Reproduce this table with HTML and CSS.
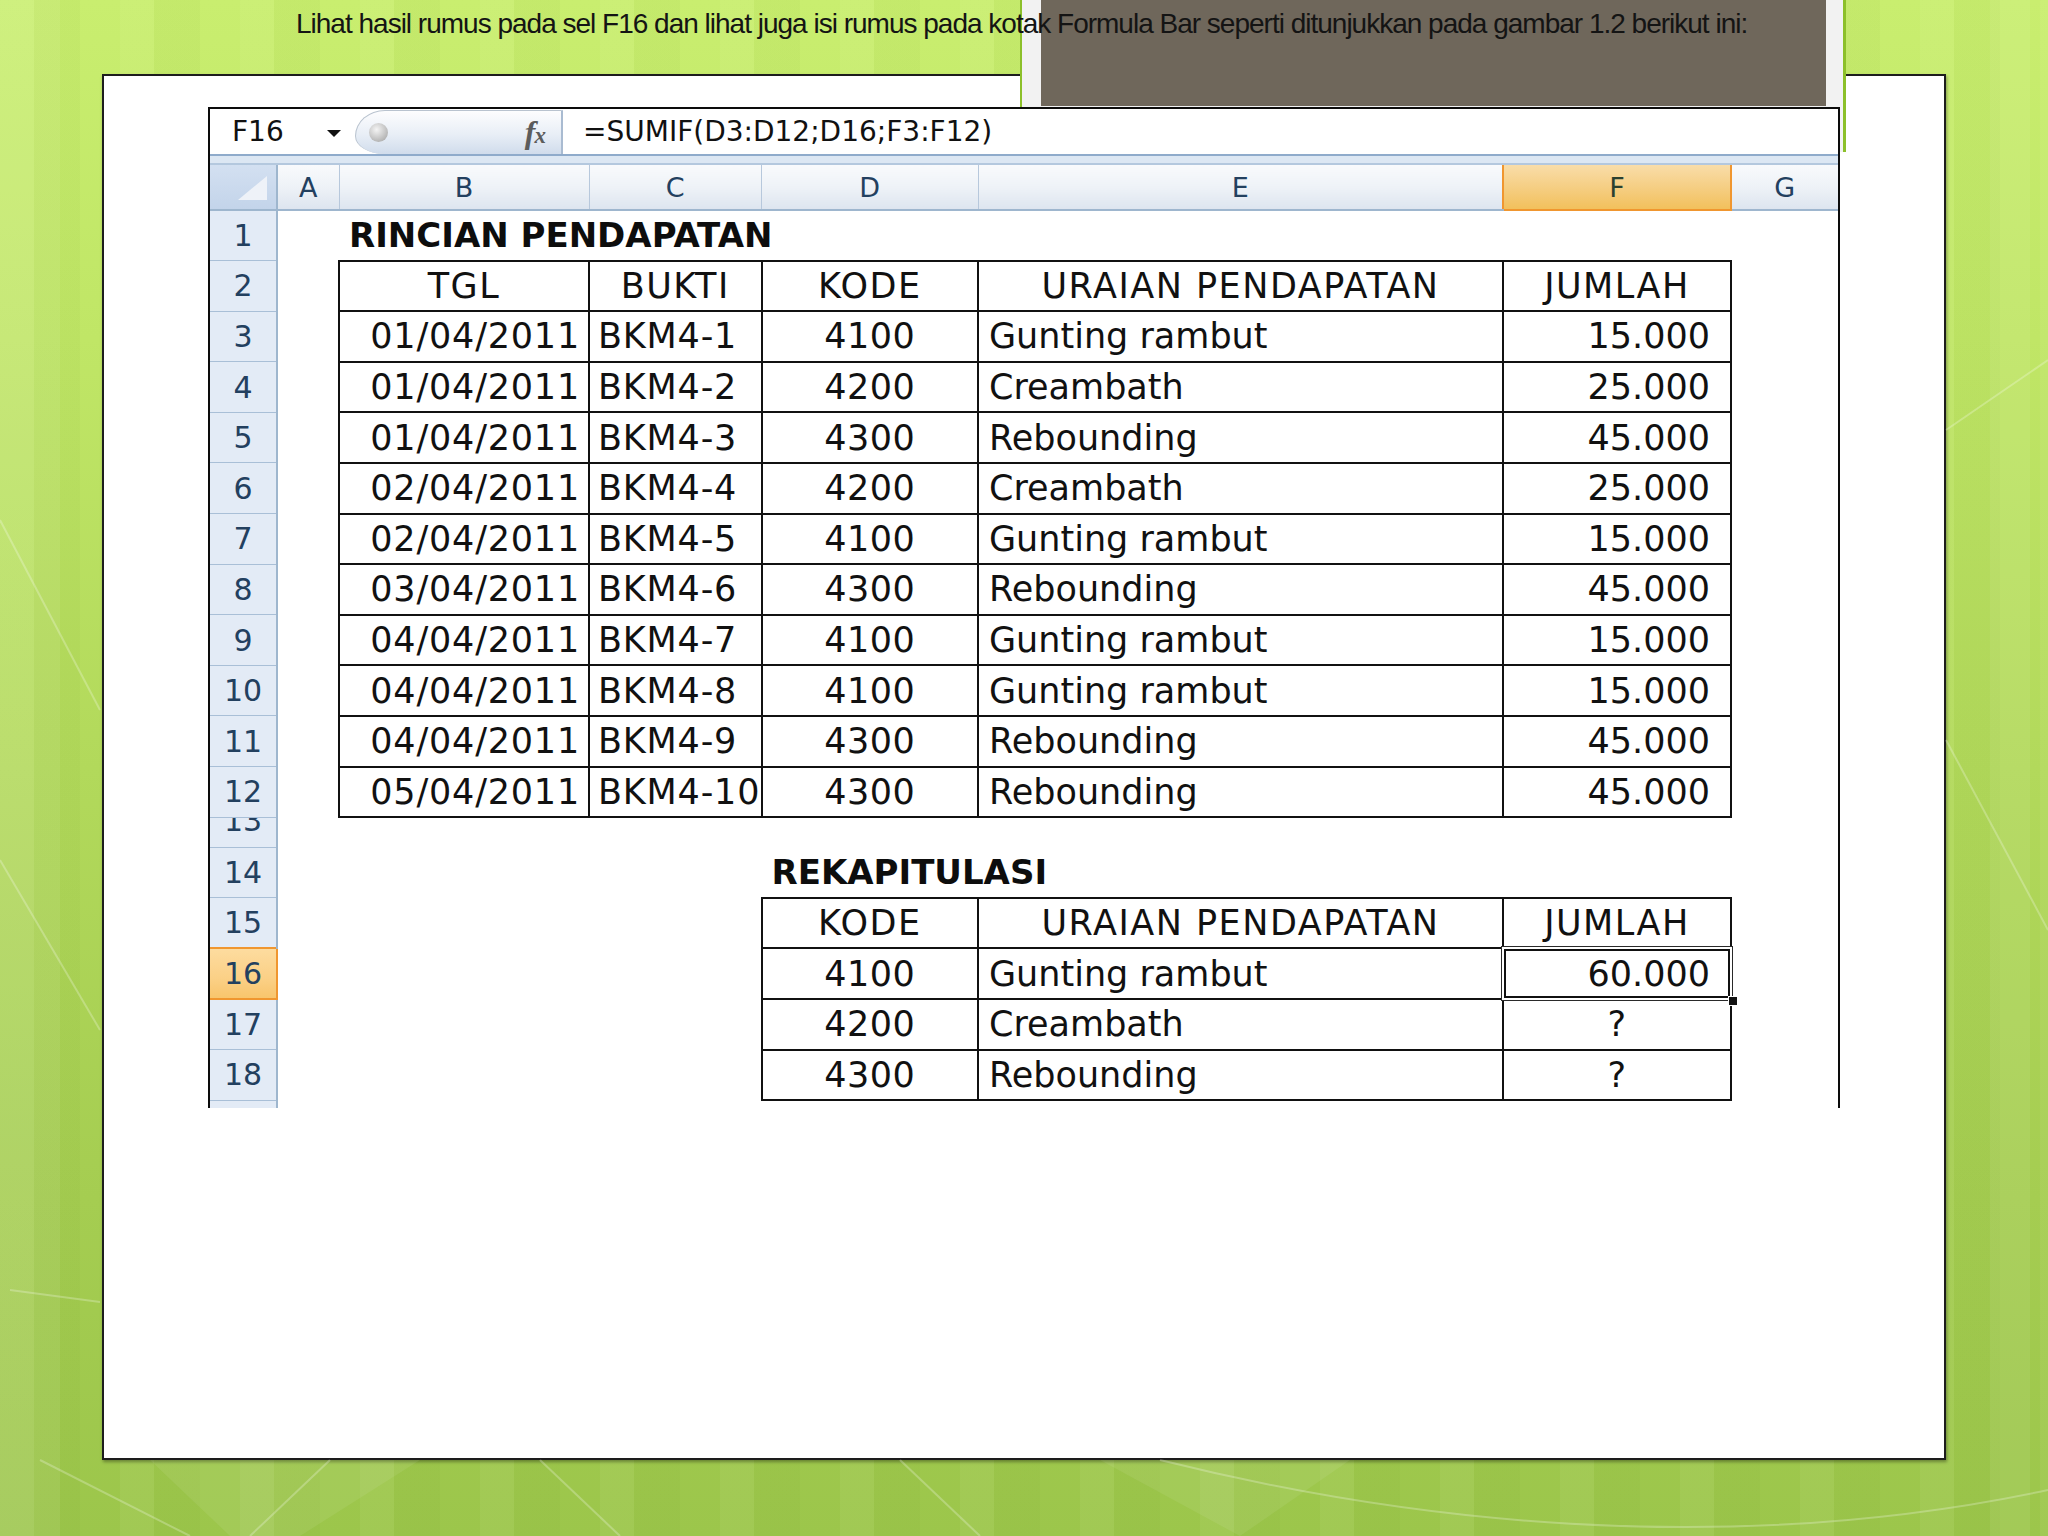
FILE: index.html
```html
<!DOCTYPE html>
<html lang="id">
<head>
<meta charset="utf-8">
<title>SUMIF - Rincian Pendapatan</title>
<link rel="stylesheet" href="styles.css">
</head>
<body>
<div class="slide">
  <svg class="bg-lines" width="2048" height="1536" viewBox="0 0 2048 1536" aria-hidden="true">
    <g fill="#ffffff" fill-opacity="0.07">
      <polygon points="0,0 60,0 60,1536 0,1536"/>
      <polygon points="1990,0 2030,0 2030,1536 1990,1536"/>
      <polygon points="150,1460 420,1460 300,1536 230,1536"/>
      <polygon points="1100,1460 1350,1460 1240,1536"/>
    </g>
    <g fill="none" stroke="#ffffff" stroke-opacity="0.25" stroke-width="2">
      <path d="M0 520 L100 710"/>
      <path d="M0 860 L100 1030"/>
      <path d="M10 1290 L100 1302"/>
      <path d="M40 1460 L190 1536"/>
      <path d="M330 1460 L250 1536"/>
      <path d="M540 1460 L620 1536"/>
      <path d="M900 1460 L980 1536"/>
      <path d="M1160 1460 C1400 1520 1720 1560 2048 1490"/>
      <path d="M1946 430 L2048 360"/>
      <path d="M1946 740 L2048 930"/>
    </g>
  </svg>

  <div class="window"><div class="window-screen"></div></div>

  <p class="caption">Lihat hasil rumus pada sel F16 dan lihat juga isi rumus pada kotak Formula Bar seperti ditunjukkan pada gambar 1.2 berikut ini:</p>

  <div class="card">
    <div class="excel">
      <div class="fbar">
        <div class="namebox"><span class="nb-text">F16</span><span class="nb-arrow"></span></div>
        <div class="fxbox"><span class="fx-dot"></span><span class="fx">f<span class="x">x</span></span></div>
        <div class="formula">=SUMIF(D3:D12;D16;F3:F12)</div>
      </div>
      <div class="fsep"></div>
      <table class="sheet">
        <colgroup>
          <col class="w-rh"><col class="w-a"><col class="w-b"><col class="w-c"><col class="w-d"><col class="w-e"><col class="w-f"><col class="w-g">
        </colgroup>
        <tr class="hdr">
          <th class="corner"></th><th class="colh">A</th><th class="colh">B</th><th class="colh">C</th><th class="colh">D</th><th class="colh">E</th><th class="colh act">F</th><th class="colh">G</th>
        </tr>
        <tr><th class="rowh">1</th><td></td><td class="title" colspan="4">RINCIAN PENDAPATAN</td><td></td><td></td></tr>
        <tr><th class="rowh">2</th><td></td><td class="t hd">TGL</td><td class="t hd">BUKTI</td><td class="t hd">KODE</td><td class="t hd">URAIAN PENDAPATAN</td><td class="t hd">JUMLAH</td><td></td></tr>
        <tr><th class="rowh">3</th><td></td><td class="t dt">01/04/2011</td><td class="t bk">BKM4-1</td><td class="t c">4100</td><td class="t ds">Gunting rambut</td><td class="t num">15.000</td><td></td></tr>
        <tr><th class="rowh">4</th><td></td><td class="t dt">01/04/2011</td><td class="t bk">BKM4-2</td><td class="t c">4200</td><td class="t ds">Creambath</td><td class="t num">25.000</td><td></td></tr>
        <tr><th class="rowh">5</th><td></td><td class="t dt">01/04/2011</td><td class="t bk">BKM4-3</td><td class="t c">4300</td><td class="t ds">Rebounding</td><td class="t num">45.000</td><td></td></tr>
        <tr><th class="rowh">6</th><td></td><td class="t dt">02/04/2011</td><td class="t bk">BKM4-4</td><td class="t c">4200</td><td class="t ds">Creambath</td><td class="t num">25.000</td><td></td></tr>
        <tr><th class="rowh">7</th><td></td><td class="t dt">02/04/2011</td><td class="t bk">BKM4-5</td><td class="t c">4100</td><td class="t ds">Gunting rambut</td><td class="t num">15.000</td><td></td></tr>
        <tr><th class="rowh">8</th><td></td><td class="t dt">03/04/2011</td><td class="t bk">BKM4-6</td><td class="t c">4300</td><td class="t ds">Rebounding</td><td class="t num">45.000</td><td></td></tr>
        <tr><th class="rowh">9</th><td></td><td class="t dt">04/04/2011</td><td class="t bk">BKM4-7</td><td class="t c">4100</td><td class="t ds">Gunting rambut</td><td class="t num">15.000</td><td></td></tr>
        <tr><th class="rowh">10</th><td></td><td class="t dt">04/04/2011</td><td class="t bk">BKM4-8</td><td class="t c">4100</td><td class="t ds">Gunting rambut</td><td class="t num">15.000</td><td></td></tr>
        <tr><th class="rowh">11</th><td></td><td class="t dt">04/04/2011</td><td class="t bk">BKM4-9</td><td class="t c">4300</td><td class="t ds">Rebounding</td><td class="t num">45.000</td><td></td></tr>
        <tr><th class="rowh">12</th><td></td><td class="t dt">05/04/2011</td><td class="t bk">BKM4-10</td><td class="t c">4300</td><td class="t ds">Rebounding</td><td class="t num">45.000</td><td></td></tr>
        <tr class="short"><th class="rowh"><div class="clip"><span>13</span></div></th><td></td><td></td><td></td><td></td><td></td><td></td><td></td></tr>
        <tr><th class="rowh">14</th><td></td><td></td><td></td><td class="title rk" colspan="2">REKAPITULASI</td><td></td><td></td></tr>
        <tr><th class="rowh">15</th><td></td><td></td><td></td><td class="t hd">KODE</td><td class="t hd">URAIAN PENDAPATAN</td><td class="t hd">JUMLAH</td><td></td></tr>
        <tr><th class="rowh act">16</th><td></td><td></td><td></td><td class="t c">4100</td><td class="t ds">Gunting rambut</td><td class="t num selcell">60.000<span class="sel"></span><span class="handle"></span></td><td></td></tr>
        <tr><th class="rowh">17</th><td></td><td></td><td></td><td class="t c">4200</td><td class="t ds">Creambath</td><td class="t c">?</td><td></td></tr>
        <tr><th class="rowh">18</th><td></td><td></td><td></td><td class="t c">4300</td><td class="t ds">Rebounding</td><td class="t c">?</td><td></td></tr>
        <tr><th class="rowh"></th><td></td><td></td><td></td><td></td><td></td><td></td><td></td></tr>
      </table>
    </div>
  </div>
</div>
</body>
</html>
```

FILE: styles.css
```css
* { box-sizing: border-box; }
html, body { margin: 0; padding: 0; }
body { width: 2048px; height: 1536px; overflow: hidden; }

.slide {
  position: relative;
  width: 2048px;
  height: 1536px;
  overflow: hidden;
  font-family: "DejaVu Sans", sans-serif;
  background:
    repeating-linear-gradient(90deg, rgba(255,255,255,0.05) 0 34px, rgba(80,120,20,0.04) 34px 80px, rgba(255,255,255,0) 80px 120px),
    linear-gradient(180deg, #c9ee6f 0%, #c0e666 22%, #b2d95b 50%, #a5cd51 78%, #9cc64b 100%);
}

.bg-lines { position: absolute; left: 0; top: 0; z-index: 0; }

.caption {
  position: relative;
  z-index: 3;
  margin: 0;
  height: 74px;
  padding-left: 296px;
  font-family: "Liberation Sans Narrow", "Liberation Sans", Arial, sans-serif;
  font-size: 28px;
  letter-spacing: -1px;
  line-height: 47px;
  color: #141414;
  white-space: nowrap;
}

.window {
  position: absolute;
  z-index: 1;
  left: 1020px;
  top: 0;
  width: 826px;
  height: 152px;
  background: #f2f2f2;
  border-left: 2px solid #8cc02a;
  border-right: 3px solid #8cc02a;
  padding: 0 17px 0 19px;
}
.window-screen { height: 106px; background: #6f675b; }

.card {
  margin-left: 102px;
  width: 1844px;
  height: 1386px;
  background: #ffffff;
  border: 2px solid #1d1d1d;
  box-shadow: 1px 2px 3px rgba(0,0,0,0.35);
  padding: 31px 0 0 104px;
}

.excel {
  position: relative;
  z-index: 2;
  width: 1632px;
  height: 1001px;
  border: 2px solid #0c0c0c;
  border-bottom: 0;
  background: #ffffff;
  overflow: hidden;
}

/* formula bar */
.fbar { display: flex; height: 45px; }
.namebox {
  width: 145px;
  display: flex;
  align-items: center;
  justify-content: space-between;
  padding: 0 14px 0 22px;
  font-size: 28px;
  color: #111;
}
.nb-arrow {
  width: 0; height: 0;
  border-left: 7px solid transparent;
  border-right: 7px solid transparent;
  border-top: 7px solid #111;
  margin-top: 4px;
}
.fxbox {
  width: 208px;
  margin-top: 1px;
  display: flex;
  align-items: center;
  border: 1px solid #b9c3cf;
  border-right: 2px solid #a9bbd1;
  border-bottom: 0;
  border-radius: 30px 0 0 30px / 26px 0 0 18px;
  background: linear-gradient(180deg, #fdfdfe 0%, #e8eef6 55%, #d0dcec 100%);
  padding: 0 16px 0 13px;
}
.fx-dot {
  width: 19px; height: 19px;
  border-radius: 50%;
  background: radial-gradient(circle at 40% 35%, #f4f4f4 0, #c9c9c9 50%, #9c9c9c 100%);
}
.fx {
  margin-left: auto;
  font-family: "Liberation Serif", serif;
  font-style: italic;
  font-weight: bold;
  font-size: 32px;
  color: #5c5c5c;
  letter-spacing: -1px;
}
.fx .x { font-size: 23px; }
.formula {
  display: flex;
  align-items: center;
  padding-left: 20px;
  font-size: 28px;
  color: #111;
}
.fsep {
  height: 11px;
  background: #dce7f3;
  border-top: 2px solid #8fabcb;
  border-bottom: 2px solid #b4c8de;
}

/* sheet */
.sheet {
  width: 1628px;
  table-layout: fixed;
  border-collapse: collapse;
  font-size: 35px;
  color: #111;
}
.w-rh { width: 67px; }
.w-a { width: 62px; }
.w-b { width: 250px; }
.w-c { width: 172.5px; }
.w-d { width: 216.5px; }
.w-e { width: 525px; }
.w-f { width: 228px; }
.w-g { width: 107px; }

.sheet th, .sheet td {
  padding: 0;
  white-space: nowrap;
  overflow: hidden;
  font-weight: normal;
  vertical-align: middle;
}
.sheet tr { height: 50.6px; }
.sheet tr.hdr { height: 45px; }
.sheet tr.short { height: 29px; }

.corner {
  position: relative;
  background: linear-gradient(180deg, #d3e0f1, #c3d4ea);
  border-right: 2px solid #9eb6ce;
  border-bottom: 2px solid #9eb6ce;
}
.corner::after {
  content: "";
  position: absolute;
  right: 9px;
  bottom: 9px;
  width: 0; height: 0;
  border-left: 29px solid transparent;
  border-bottom: 24px solid #eef2f8;
}
.colh {
  font-size: 27px;
  color: #23405f;
  text-align: center;
  background: linear-gradient(180deg, #f9fafc 0%, #eef2f7 50%, #dde5ef 100%);
  border-right: 1px solid #b7c8dc;
  border-bottom: 2px solid #9eb6ce;
}
.colh.act {
  color: #2a4030;
  background: linear-gradient(180deg, #f9dda9 0%, #f5cd80 55%, #f2c05c 100%);
  border-left: 2px solid #f0962f;
  border-right: 2px solid #f0962f;
  border-bottom: 2px solid #f0962f;
}
.rowh {
  font-size: 30px;
  color: #23405f;
  text-align: center;
  background: #e3ebf6;
  border-right: 2px solid #9eb6ce;
  border-bottom: 1px solid #a9bfd7;
}
.rowh.act {
  background: linear-gradient(180deg, #fddc9f 0%, #fbd086 60%, #f8c56c 100%);
  border-top: 2px solid #f0962f;
  border-bottom: 2px solid #f0962f;
  border-right: 2px solid #f0962f;
}
.clip {
  height: 29px;
  overflow: hidden;
  display: flex;
  align-items: flex-end;
  justify-content: center;
}
.clip span { display: block; line-height: 50.6px; flex: none; }

.sheet .t { border: 2px solid #111; }
.sheet .c { text-align: center; letter-spacing: 0.5px; }
.sheet .hd { text-align: center; letter-spacing: 1.5px; }
.sheet .dt { text-align: right; padding-right: 8px; letter-spacing: 0.8px; }
.sheet .bk { text-align: left; padding-left: 8px; letter-spacing: 0.8px; }
.sheet .ds { text-align: left; padding-left: 10px; }
.sheet .num { text-align: right; padding-right: 20px; }
.sheet .title { font-weight: bold; font-size: 34px; padding-left: 10px; color: #0d0d0d; }

.sheet .selcell { position: relative; overflow: visible; }
.sel {
  position: absolute;
  left: -3px; top: -3px; right: -3px; bottom: -3px;
  border: 1px solid #2a2a2a;
  box-shadow: inset 0 0 0 2px #ffffff, inset 0 0 0 4px #111111;
}
.handle {
  position: absolute;
  right: -8px;
  bottom: -8px;
  width: 10px;
  height: 10px;
  background: #111;
  border: 1px solid #fff;
}
```
